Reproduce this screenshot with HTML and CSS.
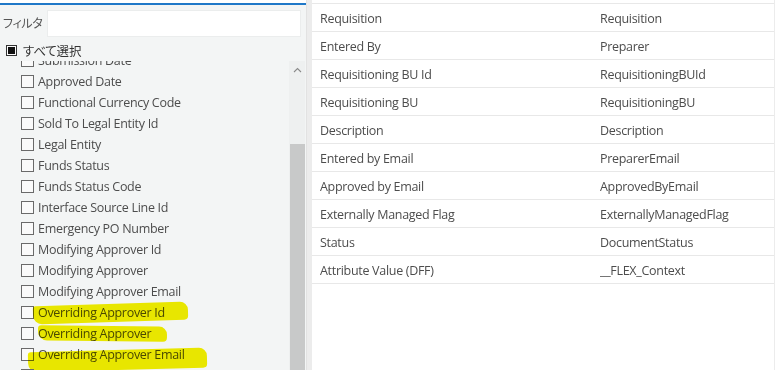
FILE: index.html
```html
<!DOCTYPE html>
<html lang="ja">
<head>
    <meta charset="UTF-8">
    <title>Field Mapping</title>
    <link rel="stylesheet" href="styles.css">
</head>
<body>
    <div class="layout">
        <div class="field-panel">
            <div class="filter-row">
                <label for="filter">フィルタ</label>
                <input type="text" id="filter" class="filter-input">
            </div>
            <div class="select-all">
                <span class="box checked"></span>
                <span>すべて選択</span>
            </div>
            <div class="list-view">
                <ul class="field-list">
                    <li><span class="box"></span>Submission Date</li>
                    <li><span class="box"></span>Approved Date</li>
                    <li><span class="box"></span>Functional Currency Code</li>
                    <li><span class="box"></span>Sold To Legal Entity Id</li>
                    <li><span class="box"></span>Legal Entity</li>
                    <li><span class="box"></span>Funds Status</li>
                    <li><span class="box"></span>Funds Status Code</li>
                    <li><span class="box"></span>Interface Source Line Id</li>
                    <li><span class="box"></span>Emergency PO Number</li>
                    <li><span class="box"></span>Modifying Approver Id</li>
                    <li><span class="box"></span>Modifying Approver</li>
                    <li><span class="box"></span>Modifying Approver Email</li>
                    <li class="marked mark-id"><span class="box"></span>Overriding Approver Id</li>
                    <li class="marked mark-appr"><span class="box"></span>Overriding Approver</li>
                    <li class="marked mark-email"><span class="box"></span>Overriding Approver Email</li>
                    <li><span class="box"></span></li>
                </ul>
                <div class="scrollbar">
                    <div class="scroll-up">
                        <svg width="9" height="6" viewBox="0 0 9 6"><path d="M1 5 L4.5 1.5 L8 5" fill="none" stroke="#8a8a8a" stroke-width="1.1"/></svg>
                    </div>
                    <div class="scroll-thumb"></div>
                </div>
            </div>
        </div>
        <div class="divider"></div>
        <div class="map-panel">
            <table class="map-table">
                <tr><td>Requisition</td><td>Requisition</td></tr>
                <tr><td>Entered By</td><td>Preparer</td></tr>
                <tr><td>Requisitioning BU Id</td><td>RequisitioningBUId</td></tr>
                <tr><td>Requisitioning BU</td><td>RequisitioningBU</td></tr>
                <tr><td>Description</td><td>Description</td></tr>
                <tr><td>Entered by Email</td><td>PreparerEmail</td></tr>
                <tr><td>Approved by Email</td><td>ApprovedByEmail</td></tr>
                <tr><td>Externally Managed Flag</td><td>ExternallyManagedFlag</td></tr>
                <tr><td>Status</td><td>DocumentStatus</td></tr>
                <tr><td>Attribute Value (DFF)</td><td>__FLEX_Context</td></tr>
            </table>
        </div>
    </div>
</body>
</html>
```

FILE: styles.css
```css
body {
    margin: 0;
    background: #ffffff;
    font-family: "Open Sans", "Noto Sans CJK JP", sans-serif;
    font-size: 12.5px;
    letter-spacing: -0.3px;
    color: #4d4d4d;
    overflow: hidden;
}
.layout {
    display: flex;
    height: 370px;
}
.field-panel {
    width: 306px;
    margin-top: 3px;
    background: #f3f5f5;
    border-top: 2px solid #1f78c8;
    display: flex;
    flex-direction: column;
    overflow: hidden;
}
.filter-row {
    display: flex;
    align-items: center;
    height: 35px;
    padding-left: 3px;
}
.filter-row label {
    font-family: "Noto Sans CJK JP", sans-serif;
    font-feature-settings: "palt";
    font-size: 12px;
    letter-spacing: -0.3px;
    color: #555;
    width: 44px;
    white-space: nowrap;
}
.filter-input {
    width: 254px;
    height: 27px;
    box-sizing: border-box;
    margin-top: 2px;
    border: 1px solid #ebeded;
    background: #ffffff;
    padding: 0 4px;
}
.select-all {
    display: flex;
    align-items: center;
    height: 21px;
    padding-left: 6px;
    font-family: "Noto Sans CJK JP", sans-serif;
    font-feature-settings: "palt";
    font-size: 12.5px;
    letter-spacing: -0.2px;
    color: #333;
}
.select-all .box {
    margin-right: 6px;
}
.box {
    display: inline-block;
    width: 11px;
    height: 11px;
    border: 1px solid #6a6a6a;
    background: #fafafa;
    flex-shrink: 0;
}
.box.checked {
    width: 9px;
    height: 9px;
    border: 1px solid #333;
    box-shadow: inset 0 0 0 1px #fafafa;
    background: #111;
}
.list-view {
    flex: 1;
    display: flex;
    overflow: hidden;
}
.field-list {
    flex: 1;
    list-style: none;
    margin: -11px 0 0 0;
    padding: 0 0 0 21px;
}
.field-list li {
    display: flex;
    align-items: center;
    height: 21px;
    position: relative;
}
.field-list li .box {
    margin-right: 4px;
}
.marked::after {
    content: "";
    position: absolute;
    background: #f4f000;
    mix-blend-mode: multiply;
    border-radius: 3px 8px 4px 9px;
}
.mark-id::after {
    left: 12px;
    top: 2px;
    width: 155px;
    height: 18px;
    transform: rotate(-1.8deg);
}
.mark-appr::after {
    left: 17px;
    top: 3px;
    width: 129px;
    height: 15px;
    transform: rotate(0.6deg);
}
.mark-email::after {
    left: 7px;
    top: 6px;
    width: 179px;
    height: 20px;
    transform: rotate(-1.5deg);
}
.scrollbar {
    width: 16px;
    margin-right: 1px;
    background: #eef0f0;
    display: flex;
    flex-direction: column;
}
.scroll-up {
    height: 83px;
    display: flex;
    justify-content: center;
    padding-top: 6px;
    box-sizing: border-box;
}
.scroll-thumb {
    flex: 1;
    background: #c8c9c9;
    margin-left: 1px;
}
.divider {
    width: 5px;
    background: #ececec;
    border-left: 1px solid #e2e2e2;
}
.map-panel {
    flex: 1;
    padding-top: 3px;
    border-right: 1px solid #ececec;
}
.map-table {
    width: 100%;
    table-layout: fixed;
    border-collapse: collapse;
    border-top: 1px solid #e8e8e8;
}
.map-table td {
    height: 25px;
    padding: 2px 0 0 8px;
    border-bottom: 1px solid #e8e8e8;
    color: #4d4d4d;
    white-space: nowrap;
}
.map-table td:first-child {
    width: 272px;
}
```
